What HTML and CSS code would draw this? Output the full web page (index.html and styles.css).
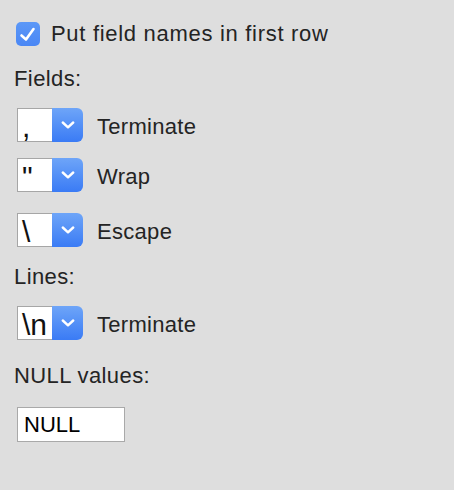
FILE: index.html
```html
<!DOCTYPE html>
<html lang="en">
<head>
    <meta charset="UTF-8">
    <title>Export options</title>
    <link rel="stylesheet" href="styles.css">
</head>
<body>
    <div class="panel">
        <label class="check-row">
            <span class="checkbox">
                <svg width="24" height="24" viewBox="0 0 24 24"><path d="M5.5 13.5 L10 17.5 L17.5 7" fill="none" stroke="#fff" stroke-width="2.6" stroke-linecap="round" stroke-linejoin="round"/></svg>
            </span>
            <span class="check-text">Put field names in first row</span>
        </label>

        <div class="section-label label-fields">Fields:</div>

        <div class="option-row row-first">
            <div class="popup">
                <span class="popup-value">,</span>
                <span class="popup-arrow"><svg width="14" height="8" viewBox="0 0 14 8"><path d="M1.8 1.5 L7 6.3 L12.2 1.5" fill="none" stroke="#fff" stroke-width="2.4" stroke-linecap="round" stroke-linejoin="round"/></svg></span>
            </div>
            <span class="option-label">Terminate</span>
        </div>
        <div class="option-row row-wrap">
            <div class="popup">
                <span class="popup-value">"</span>
                <span class="popup-arrow"><svg width="14" height="8" viewBox="0 0 14 8"><path d="M1.8 1.5 L7 6.3 L12.2 1.5" fill="none" stroke="#fff" stroke-width="2.4" stroke-linecap="round" stroke-linejoin="round"/></svg></span>
            </div>
            <span class="option-label">Wrap</span>
        </div>
        <div class="option-row row-escape">
            <div class="popup">
                <span class="popup-value">\</span>
                <span class="popup-arrow"><svg width="14" height="8" viewBox="0 0 14 8"><path d="M1.8 1.5 L7 6.3 L12.2 1.5" fill="none" stroke="#fff" stroke-width="2.4" stroke-linecap="round" stroke-linejoin="round"/></svg></span>
            </div>
            <span class="option-label">Escape</span>
        </div>

        <div class="section-label label-lines">Lines:</div>

        <div class="option-row row-first">
            <div class="popup">
                <span class="popup-value">\n</span>
                <span class="popup-arrow"><svg width="14" height="8" viewBox="0 0 14 8"><path d="M1.8 1.5 L7 6.3 L12.2 1.5" fill="none" stroke="#fff" stroke-width="2.4" stroke-linecap="round" stroke-linejoin="round"/></svg></span>
            </div>
            <span class="option-label">Terminate</span>
        </div>

        <div class="section-label label-null">NULL values:</div>

        <input class="null-input" type="text" value="NULL">
    </div>
</body>
</html>
```

FILE: styles.css
```css
* {
    margin: 0;
    padding: 0;
    box-sizing: border-box;
}

body {
    background: #dedede;
    font-family: 'Liberation Sans', Arial, sans-serif;
    color: #242424;
}

.panel {
    display: flex;
    flex-direction: column;
    align-items: flex-start;
    padding: 22px 16px 40px 16px;
}

/* checkbox */
.check-row {
    display: flex;
    align-items: center;
    gap: 11px;
    height: 24px;
}

.checkbox {
    width: 24px;
    height: 24px;
    border-radius: 5px;
    background: linear-gradient(#5c98f7, #4a87f5);
    display: flex;
}

.check-text {
    font-size: 22px;
    line-height: 24px;
    letter-spacing: 0.7px;
}

/* section labels */
.section-label {
    font-size: 22px;
    line-height: 26px;
    letter-spacing: 0.4px;
    margin-left: -2px;
}

.label-fields {
    margin-top: 20px;
}

.label-lines {
    margin-top: 17px;
}

.label-null {
    margin-top: 23px;
}

/* popup rows */
.option-row {
    display: flex;
    align-items: flex-start;
    gap: 14px;
    margin-top: 16px;
    margin-left: 1px;
    height: 34px;
}

.row-escape {
    margin-top: 21px;
}

.popup {
    display: flex;
    height: 34px;
}

.popup-value {
    width: 35px;
    height: 34px;
    background: #fff;
    border: 1px solid #a6a6a6;
    border-right: none;
    font-size: 30px;
    line-height: 32px;
    padding: 2px 0 0 4px;
    color: #111;
    overflow: hidden;
    white-space: nowrap;
}

.popup-arrow {
    width: 31px;
    height: 34px;
    border-radius: 0 6px 6px 0;
    background: linear-gradient(#6ea5f8, #3a7bf5);
    display: flex;
    align-items: center;
    justify-content: center;
}

.option-label {
    font-size: 22px;
    line-height: 30px;
    padding-top: 4px;
    letter-spacing: 0.3px;
}

/* null value field */
.null-input {
    margin-top: 18px;
    margin-left: 1px;
    width: 108px;
    height: 35px;
    border: 1px solid #a9a9a9;
    background: #fff;
    font-family: 'Liberation Sans', Arial, sans-serif;
    font-size: 22px;
    color: #000;
    padding: 1px 6px 0 6px;
    outline: none;
}
```
